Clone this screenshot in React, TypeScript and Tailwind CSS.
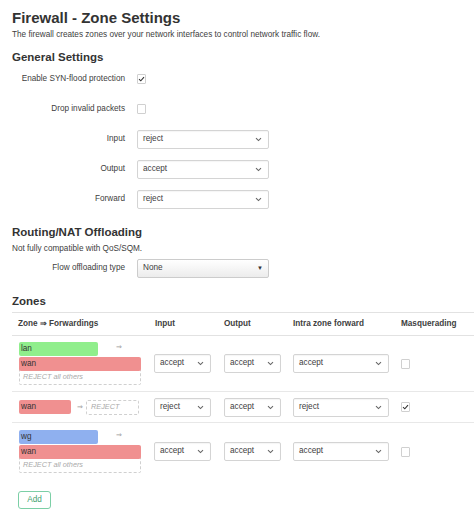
import React from "react";

const Chevron = () => (
  <svg width="7" height="5" viewBox="0 0 7 5" className="shrink-0">
    <path d="M1 1.2 L3.5 3.6 L6 1.2" fill="none" stroke="#666" strokeWidth="1.1" />
  </svg>
);

const Select = ({ value, w }: { value: string; w: string }) => (
  <div className={`${w} h-[19px] border border-[#d4d4d4] rounded-[2px] bg-white flex items-center justify-between pl-[5px] pr-[6px] text-[8.2px] text-[#404040] shadow-[inset_0_1px_1px_rgba(0,0,0,0.04)]`}>
    <span>{value}</span>
    <Chevron />
  </div>
);

const Check = ({ checked }: { checked?: boolean }) => (
  <div className="w-[9px] h-[10px] border border-[#d0d0d0] rounded-[1px] bg-white flex items-center justify-center">
    {checked && (
      <svg width="7" height="6" viewBox="0 0 7 6">
        <path d="M1 3.2 L2.8 4.8 L6 1.2" fill="none" stroke="#333" strokeWidth="1.1" />
      </svg>
    )}
  </div>
);

const Row = ({ label, children }: { label: string; children: React.ReactNode }) => (
  <div className="flex items-center h-[30px]">
    <div className="w-[113px] text-right text-[8.2px] text-[#404040]">{label}</div>
    <div className="ml-[12px] flex items-center">{children}</div>
  </div>
);

const Badge = ({ name, color, w }: { name: string; color: string; w: string }) => (
  <div className={`${w} ${color} h-[14px] rounded-[2px] flex items-center pl-[2px] text-[8.2px] text-[#333] leading-none`}>
    {name}
  </div>
);

const Arrow = () => <span className="text-[7px] text-[#999] leading-none">⇒</span>;

export default function App() {
  return (
    <div className="w-[474px] h-[515px] overflow-hidden bg-white pl-[12px] pt-[8px] text-[#404040]" style={{ fontFamily: '"Liberation Sans", Arial, sans-serif' }}>
      <h2 className="text-[15px] font-bold text-[#333] leading-[20px]">Firewall - Zone Settings</h2>
      <p className="text-[8.2px] mt-[1px] leading-[12px]">The firewall creates zones over your network interfaces to control network traffic flow.</p>

      <h3 className="text-[11.5px] font-bold text-[#333] mt-[8px] leading-[16px]">General Settings</h3>
      <div className="-mt-[1px]">
        <Row label="Enable SYN-flood protection"><Check checked /></Row>
        <Row label="Drop invalid packets"><Check /></Row>
        <Row label="Input"><Select value="reject" w="w-[132px]" /></Row>
        <Row label="Output"><Select value="accept" w="w-[132px]" /></Row>
        <Row label="Forward"><Select value="reject" w="w-[132px]" /></Row>
      </div>

      <h3 className="text-[11.5px] font-bold text-[#333] mt-[10px] leading-[16px]">Routing/NAT Offloading</h3>
      <p className="text-[8.2px] mt-[3px] leading-[12px]">Not fully compatible with QoS/SQM.</p>
      <div className="-mt-[2px]">
        <Row label="Flow offloading type">
          <div className="w-[132px] h-[19px] border border-[#ccc] rounded-[2px] bg-gradient-to-b from-white to-[#ececec] flex items-center justify-between pl-[5px] pr-[5px] text-[8.2px] text-[#404040]">
            <span>None</span>
            <span className="text-[6px] text-[#333]">▼</span>
          </div>
        </Row>
      </div>

      <h3 className="text-[11.5px] font-bold text-[#333] mt-[10px] leading-[16px]">Zones</h3>
      <div className="mt-[3px] text-[8.2px]">
        <div className="grid grid-cols-[136px_70px_69px_108px_1fr] border-t border-b border-[#e2e2e2] h-[24px] items-center font-bold text-[#404040]">
          <div className="pl-[6px]">Zone ⇒ Forwardings</div>
          <div className="pl-[7px]">Input</div>
          <div className="pl-[6px]">Output</div>
          <div className="pl-[6px]">Intra zone forward</div>
          <div className="pl-[6px]">Masquerading</div>
        </div>

        {/* Row 1 */}
        <div className="grid grid-cols-[136px_70px_69px_108px_1fr] border-b border-[#e8e8e8] h-[56px] items-center">
          <div className="pl-[7px] flex flex-col">
            <div className="flex items-center">
              <Badge name="lan" color="bg-[#90ee8c]" w="w-[79px]" />
              <div className="ml-[18px] -mt-[4px]"><Arrow /></div>
            </div>
            <div className="w-[122px] border border-dashed border-[#d0d0d0] rounded-[2px] mt-[1px]">
              <div className="h-[14px] bg-[#f09090] rounded-[2px] flex items-center pl-[2px] -m-[1px] mb-0 text-[#333]">wan</div>
              <div className="h-[13px] flex items-center pl-[3px] italic text-[7.3px] text-[#aaa]">REJECT all others</div>
            </div>
          </div>
          <div className="pl-[6px]"><Select value="accept" w="w-[57px]" /></div>
          <div className="pl-[6px]"><Select value="accept" w="w-[57px]" /></div>
          <div className="pl-[6px]"><Select value="accept" w="w-[96px]" /></div>
          <div className="pl-[6px]"><Check /></div>
        </div>

        {/* Row 2 */}
        <div className="grid grid-cols-[136px_70px_69px_108px_1fr] border-b border-[#e8e8e8] h-[31px] items-center">
          <div className="pl-[7px] flex items-center">
            <Badge name="wan" color="bg-[#f09090]" w="w-[52px]" />
            <div className="ml-[6px] mr-[3px]"><Arrow /></div>
            <div className="w-[53px] h-[15px] border border-dashed border-[#d0d0d0] rounded-[2px] flex items-center pl-[4px] italic text-[7.3px] text-[#aaa]">REJECT</div>
          </div>
          <div className="pl-[6px]"><Select value="reject" w="w-[57px]" /></div>
          <div className="pl-[6px]"><Select value="accept" w="w-[57px]" /></div>
          <div className="pl-[6px]"><Select value="reject" w="w-[96px]" /></div>
          <div className="pl-[6px]"><Check checked /></div>
        </div>

        {/* Row 3 */}
        <div className="grid grid-cols-[136px_70px_69px_108px_1fr] h-[57px] items-center">
          <div className="pl-[7px] flex flex-col">
            <div className="flex items-center">
              <Badge name="wg" color="bg-[#8fb0ef]" w="w-[79px]" />
              <div className="ml-[18px] -mt-[4px]"><Arrow /></div>
            </div>
            <div className="w-[122px] border border-dashed border-[#d0d0d0] rounded-[2px] mt-[1px]">
              <div className="h-[14px] bg-[#f09090] rounded-[2px] flex items-center pl-[2px] -m-[1px] mb-0 text-[#333]">wan</div>
              <div className="h-[13px] flex items-center pl-[3px] italic text-[7.3px] text-[#aaa]">REJECT all others</div>
            </div>
          </div>
          <div className="pl-[6px]"><Select value="accept" w="w-[57px]" /></div>
          <div className="pl-[6px]"><Select value="accept" w="w-[57px]" /></div>
          <div className="pl-[6px]"><Select value="accept" w="w-[96px]" /></div>
          <div className="pl-[6px]"><Check /></div>
        </div>

        <div className="mt-[11px] pl-[6px]">
          <div className="w-[33px] h-[18px] border border-[#7ccfa6] rounded-[3px] flex items-center justify-center text-[8.2px] text-[#3f9f6f]">Add</div>
        </div>
      </div>
    </div>
  );
}
